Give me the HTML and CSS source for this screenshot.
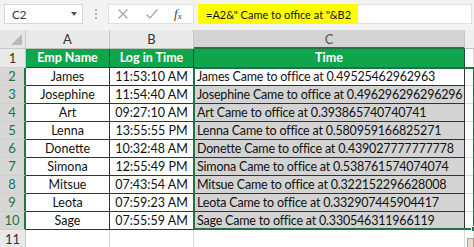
FILE: index.html
```html
<!DOCTYPE html>
<html>
<head>
<meta charset="utf-8">
<link rel="stylesheet" href="styles.css">
</head>
<body>
<div class="topbar">
  <div class="namebox"><span class="nb-text">C2</span><span class="nb-arrow"></span></div>
  <div class="dots"><i></i><i></i><i></i></div>
  <div class="fbtns">
    <svg class="ico" width="12" height="12" viewBox="0 0 12 12"><path d="M1.5 1.5 L10.5 10.5 M10.5 1.5 L1.5 10.5" stroke="#a6a6a6" stroke-width="1.3" fill="none"/></svg>
    <svg class="ico" width="14" height="12" viewBox="0 0 14 12"><path d="M1.5 6.5 L5 10 L12.5 1.5" stroke="#a6a6a6" stroke-width="1.3" fill="none"/></svg>
    <span class="fx">f<sub>x</sub></span>
  </div>
  <div class="finput"><span class="formula">=A2&amp;" Came to office at "&amp;B2</span></div>
</div>
<div class="sheet">
  <div class="corner"><span class="tri"></span></div>
  <div class="colh">A</div>
  <div class="colh">B</div>
  <div class="colh sel">C</div>
  <div class="colh last"></div>

  <div class="rowh">1</div>
  <div class="cell hd">Emp Name</div>
  <div class="cell hd">Log in Time</div>
  <div class="cell hd">Time</div>
  <div class="gc"></div>

  <div class="rowh sel">2</div>
  <div class="cell c">James</div>
  <div class="cell c">11:53:10 AM</div>
  <div class="cell t active">James Came to office at 0.49525462962963</div>
  <div class="gc"></div>

  <div class="rowh sel">3</div>
  <div class="cell c">Josephine</div>
  <div class="cell c">11:54:40 AM</div>
  <div class="cell t">Josephine Came to office at 0.496296296296296</div>
  <div class="gc"></div>

  <div class="rowh sel">4</div>
  <div class="cell c">Art</div>
  <div class="cell c">09:27:10 AM</div>
  <div class="cell t">Art Came to office at 0.393865740740741</div>
  <div class="gc"></div>

  <div class="rowh sel">5</div>
  <div class="cell c">Lenna</div>
  <div class="cell c">13:55:55 PM</div>
  <div class="cell t">Lenna Came to office at 0.580959166825271</div>
  <div class="gc"></div>

  <div class="rowh sel">6</div>
  <div class="cell c">Donette</div>
  <div class="cell c">10:32:48 AM</div>
  <div class="cell t">Donette Came to office at 0.439027777777778</div>
  <div class="gc"></div>

  <div class="rowh sel">7</div>
  <div class="cell c">Simona</div>
  <div class="cell c">12:55:49 PM</div>
  <div class="cell t">Simona Came to office at 0.538761574074074</div>
  <div class="gc"></div>

  <div class="rowh sel">8</div>
  <div class="cell c">Mitsue</div>
  <div class="cell c">07:43:54 AM</div>
  <div class="cell t">Mitsue Came to office at 0.322152296628008</div>
  <div class="gc"></div>

  <div class="rowh sel">9</div>
  <div class="cell c">Leota</div>
  <div class="cell c">07:59:23 AM</div>
  <div class="cell t">Leota Came to office at 0.332907445904417</div>
  <div class="gc"></div>

  <div class="rowh sel">10</div>
  <div class="cell c">Sage</div>
  <div class="cell c">07:55:59 AM</div>
  <div class="cell t">Sage Came to office at 0.330546311966119</div>
  <div class="gc"></div>

  <div class="rowh">11</div>
  <div class="gc"></div>
  <div class="gc"></div>
  <div class="gc"></div>
  <div class="gc"></div>

  <div class="selection"><span class="handle"></span></div>
  <div class="paste"></div>
</div>
</body>
</html>
```

FILE: styles.css
```css
* { box-sizing: border-box; }
html, body {
  margin: 0;
  padding: 0;
  width: 474px;
  height: 247px;
  overflow: hidden;
  background: #ffffff;
  font-family: Lato, "Open Sans", sans-serif;
}
.topbar {
  height: 30px;
  background: #f3f3f3;
  display: flex;
  align-items: flex-start;
  padding: 4px 2px 0 4px;
}
.namebox {
  width: 79px;
  height: 20px;
  background: #fff;
  border: 1px solid #d6d6d6;
  display: flex;
  align-items: center;
  justify-content: space-between;
  padding: 0 5px 0 7px;
  font-size: 11.5px;
  color: #333;
}
.nb-arrow {
  width: 0; height: 0;
  border-left: 3.5px solid transparent;
  border-right: 3.5px solid transparent;
  border-top: 4px solid #555;
}
.dots {
  width: 25px;
  height: 20px;
  display: flex;
  flex-direction: column;
  align-items: center;
  justify-content: center;
  gap: 2px;
}
.dots i {
  display: block;
  width: 2px; height: 2px;
  background: #b5b5b5;
}
.fbtns {
  width: 86px;
  height: 20px;
  background: #fff;
  border: 1px solid #e0e0e0;
  display: flex;
  align-items: center;
  padding: 0 0 0 8px;
}
.fbtns .ico { display: block; }
.fbtns .ico:first-child { margin-right: 16px; }
.fbtns .ico:nth-child(2) { margin-right: 15px; }
.fx {
  font-family: "Liberation Serif", serif;
  font-style: italic;
  font-size: 13px;
  color: #444;
  line-height: 1;
}
.fx sub { font-size: 9px; vertical-align: -1px; }
.finput {
  flex: 1;
  height: 20px;
  margin-left: 4px;
  background: #fff;
  border: 1px solid #e0e0e0;
  border-left: none;
  display: flex;
}
.formula {
  background: #ffff00;
  height: 20px;
  margin-top: -1px;
  padding: 0 7px 0 8px;
  font-size: 11px;
  line-height: 21px;
  color: #111;
  white-space: nowrap;
}
.sheet {
  position: relative;
  display: grid;
  grid-template-columns: 26px 84px 84px 271px 1fr;
  grid-template-rows: 19px 19px repeat(10, 18px);
  font-size: 12.5px;
}
.corner {
  background: #e6e6e6;
  border-right: 1px solid #c8c8c8;
  border-bottom: 1px solid #c8c8c8;
  position: relative;
}
.tri {
  position: absolute;
  right: 3px; bottom: 3px;
  width: 0; height: 0;
  border-left: 11px solid transparent;
  border-bottom: 11px solid #b8b8b8;
}
.colh {
  background: #e9e9e9;
  border-right: 1px solid #c8c8c8;
  border-bottom: 1px solid #c0c0c0;
  text-align: center;
  line-height: 18px;
  color: #333;
  font-size: 13px;
}
.colh.sel {
  background: #d4d4d4;
  border-bottom: 2px solid #217346;
  color: #555;
}
.colh.last { border-right: none; background: #efefef; }
.rowh {
  background: #e9e9e9;
  border-right: 1px solid #c8c8c8;
  border-bottom: 1px solid #d0d0d0;
  text-align: center;
  line-height: 18px;
  color: #333;
  font-size: 13px;
}
.rowh.sel {
  background: #d7d7d7;
  color: #217346;
  border-right: 2px solid #217346;
  line-height: 17px;
}
.cell {
  border-right: 1px solid #333;
  border-bottom: 1px solid #333;
  line-height: 17px;
  white-space: nowrap;
  overflow: hidden;
  color: #111;
}
.cell.hd {
  background: #0fa54c;
  color: #fff;
  font-weight: bold;
  text-align: center;
  line-height: 18px;
  border-color: #1e4d2e;
}
.cell.c { text-align: center; }
.cell.t {
  background: #d3d3d3;
  padding-left: 3px;
  letter-spacing: -0.2px;
}
.cell.hd.hd { letter-spacing: 0; }
.cell.t.active { background: #ffffff; }
.gc {
  border-right: 1px solid #dadada;
  border-bottom: 1px solid #dadada;
}
.selection {
  position: absolute;
  grid-column: 4;
  grid-row: 3 / 12;
  top: -1px;
  left: -1px;
  right: -1px;
  bottom: 0;
  border: 2px solid #217346;
  pointer-events: none;
}
.handle {
  position: absolute;
  right: -4px;
  bottom: -4px;
  width: 6px; height: 6px;
  background: #217346;
  border: 1px solid #fff;
}
.paste {
  position: absolute;
  grid-column: 5;
  grid-row: 12;
  right: 0;
  top: 8px;
  width: 7px;
  height: 12px;
  background: #e8dcd0;
  border: 1px solid #b0a090;
}
```
